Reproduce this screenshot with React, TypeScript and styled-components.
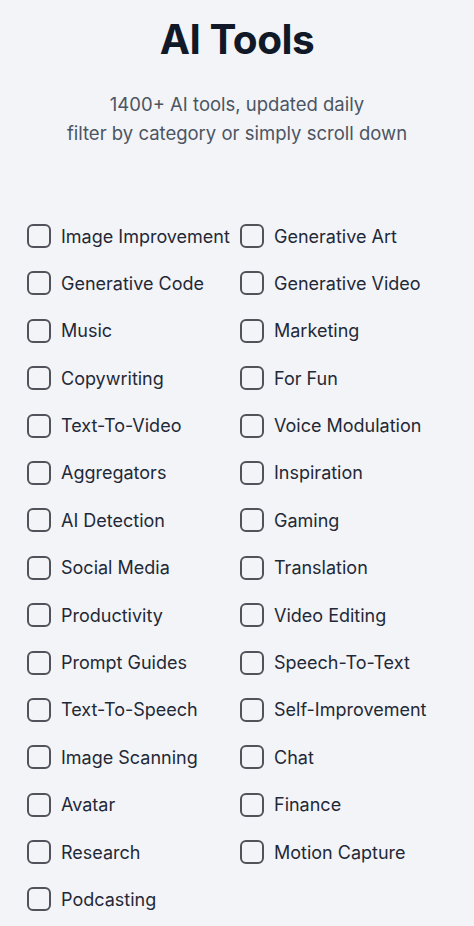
import React from 'react';
import styled, {createGlobalStyle} from "styled-components";

const categories = [
    'Image Improvement', 'Generative Art',
    'Generative Code', 'Generative Video',
    'Music', 'Marketing',
    'Copywriting', 'For Fun',
    'Text-To-Video', 'Voice Modulation',
    'Aggregators', 'Inspiration',
    'AI Detection', 'Gaming',
    'Social Media', 'Translation',
    'Productivity', 'Video Editing',
    'Prompt Guides', 'Speech-To-Text',
    'Text-To-Speech', 'Self-Improvement',
    'Image Scanning', 'Chat',
    'Avatar', 'Finance',
    'Research', 'Motion Capture',
    'Podcasting',
]

const GlobalStyle = createGlobalStyle`
    body {
        margin: 0;
        background-color: #f3f4f7;
        font-family: Inter, "Noto Sans", sans-serif;
    }
`

export default function App() {
    return (
        <StyledPage>
            <GlobalStyle/>
            <Title>AI Tools</Title>
            <Subtitle>
                1400+ AI tools, updated daily<br/>
                filter by category or simply scroll down
            </Subtitle>
            <CategoryGrid>
                {categories.map((c) => (
                    <CategoryItem key={c}>
                        <Box type="checkbox"/>
                        <span>{c}</span>
                    </CategoryItem>
                ))}
            </CategoryGrid>
        </StyledPage>
    );
}

const StyledPage = styled.main`
    min-height: 926px;
    display: flex;
    flex-direction: column;
    align-items: center;
    padding-top: 16px;
    box-sizing: border-box;
`

const Title = styled.h1`
    margin: 0;
    font-size: 40.5px;
    font-weight: 700;
    line-height: 48px;
    color: #111827;
    letter-spacing: -0.5px;
`

const Subtitle = styled.p`
    margin: 26px 0 0;
    font-size: 18.5px;
    line-height: 29px;
    color: #4b5563;
    text-align: center;
`

const CategoryGrid = styled.div`
    align-self: stretch;
    display: grid;
    grid-template-columns: 213px 1fr;
    row-gap: 23.4px;
    padding: 76px 0 0 27px;
`

const CategoryItem = styled.label`
    display: flex;
    align-items: center;
    gap: 10px;
    height: 24px;
    font-size: 18px;
    color: #1f2937;
    white-space: nowrap;
`

const Box = styled.input`
    appearance: none;
    margin: 0;
    width: 24px;
    height: 24px;
    border: 2px solid #52525b;
    border-radius: 6px;
    background: transparent;
    box-sizing: border-box;
    flex-shrink: 0;
`
